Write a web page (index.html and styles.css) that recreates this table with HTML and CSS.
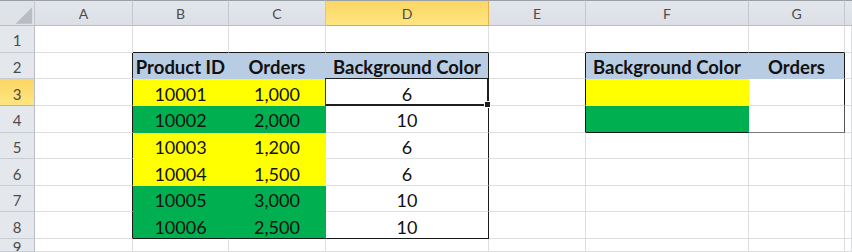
FILE: index.html
```html
<!DOCTYPE html>
<html lang="en">
<head>
<meta charset="utf-8">
<title>Sheet1</title>
<link rel="stylesheet" href="styles.css">
</head>
<body>
<div class="sheet">
  <!-- column headings -->
  <div class="corner"><svg width="35" height="26" viewBox="0 0 35 26"><polygon points="33,7 33,24 16,24" fill="#b9bdc3"/></svg></div>
  <div class="ch">A</div>
  <div class="ch">B</div>
  <div class="ch">C</div>
  <div class="ch sel">D</div>
  <div class="ch">E</div>
  <div class="ch">F</div>
  <div class="ch">G</div>
  <div class="ch last"></div>

  <!-- row 1 -->
  <div class="rh">1</div>
  <div class="c"></div>
  <div class="c kb"></div>
  <div class="c kb"></div>
  <div class="c kb"></div>
  <div class="c"></div>
  <div class="c kb"></div>
  <div class="c kb"></div>
  <div class="c"></div>

  <!-- row 2 -->
  <div class="rh">2</div>
  <div class="c kr"></div>
  <div class="c hb">Product ID</div>
  <div class="c hb">Orders</div>
  <div class="c hb kr">Background Color</div>
  <div class="c kr"></div>
  <div class="c hb">Background Color</div>
  <div class="c hb kr">Orders</div>
  <div class="c"></div>

  <!-- row 3 -->
  <div class="rh sel">3</div>
  <div class="c kr"></div>
  <div class="c y">10001</div>
  <div class="c y">1,000</div>
  <div class="c kr active">6<span class="cursor"><span class="handle"></span></span></div>
  <div class="c kr"></div>
  <div class="c y"></div>
  <div class="c kr"></div>
  <div class="c"></div>

  <!-- row 4 -->
  <div class="rh">4</div>
  <div class="c kr"></div>
  <div class="c g">10002</div>
  <div class="c g">2,000</div>
  <div class="c kr">10</div>
  <div class="c kr"></div>
  <div class="c g kb"></div>
  <div class="c kr kb soft"></div>
  <div class="c"></div>

  <!-- row 5 -->
  <div class="rh">5</div>
  <div class="c kr"></div>
  <div class="c y">10003</div>
  <div class="c y">1,200</div>
  <div class="c kr">6</div>
  <div class="c"></div>
  <div class="c"></div>
  <div class="c"></div>
  <div class="c"></div>

  <!-- row 6 -->
  <div class="rh">6</div>
  <div class="c kr"></div>
  <div class="c y">10004</div>
  <div class="c y">1,500</div>
  <div class="c kr">6</div>
  <div class="c"></div>
  <div class="c"></div>
  <div class="c"></div>
  <div class="c"></div>

  <!-- row 7 -->
  <div class="rh">7</div>
  <div class="c kr"></div>
  <div class="c g">10005</div>
  <div class="c g">3,000</div>
  <div class="c kr">10</div>
  <div class="c"></div>
  <div class="c"></div>
  <div class="c"></div>
  <div class="c"></div>

  <!-- row 8 -->
  <div class="rh">8</div>
  <div class="c kr"></div>
  <div class="c g kb">10006</div>
  <div class="c g kb">2,500</div>
  <div class="c kr kb">10</div>
  <div class="c"></div>
  <div class="c"></div>
  <div class="c"></div>
  <div class="c"></div>

  <!-- row 9 -->
  <div class="rh">9</div>
  <div class="c"></div>
  <div class="c"></div>
  <div class="c"></div>
  <div class="c"></div>
  <div class="c"></div>
  <div class="c"></div>
  <div class="c"></div>
  <div class="c"></div>
</div>
</body>
</html>
```
FILE: styles.css
```css
html, body {
  margin: 0;
  padding: 0;
  background: #ffffff;
}

.sheet {
  display: grid;
  grid-template-columns: 35px 98px 96px 97px 163px 97px 163px 96px 7px;
  grid-template-rows: 26px repeat(8, 26.65px) 1fr;
  width: 852px;
  height: 252px;
  overflow: hidden;
  font-family: Lato, "Open Sans", sans-serif;
}

.sheet > div {
  box-sizing: border-box;
  display: flex;
  align-items: center;
  justify-content: center;
  overflow: hidden;
  white-space: nowrap;
}

/* headings */
.corner,
.ch {
  background: linear-gradient(#e3e6eb, #dcdfe5);
  border-top: 1px solid #9aa0a8;
  border-right: 1px solid #c4c8ce;
  border-bottom: 1px solid #b9bec5;
  color: #4c4c4c;
  font-size: 14px;
  padding-top: 1px;
}

.corner {
  align-items: stretch;
  padding: 0;
  background: #dfe2e7;
}

.corner svg {
  display: block;
  margin-top: -1px;
}

.ch.sel {
  background: linear-gradient(#fbd663, #ffe582);
  border-right-color: #e0b24a;
  border-bottom-color: #d9a93c;
}

.ch.last {
  border-right: none;
}

.rh {
  background: #e4e7ec;
  border-right: 1px solid #b9bec5;
  border-bottom: 1px solid #c9cdd3;
  color: #4c4c4c;
  font-size: 15px;
  padding-top: 3px;
}

.rh.sel {
  background: linear-gradient(#fbd663, #ffe582);
  border-bottom-color: #e0b24a;
}

/* cells */
.c {
  position: relative;
  border-right: 1px solid #dcdedf;
  border-bottom: 1px solid #dcdedf;
  font-size: 18px;
  color: #111111;
  padding-top: 3px;
}

.hb {
  background: #b8cce4;
  border-color: transparent !important;
  font-weight: 700;
  font-size: 18.5px;
}

.y {
  background: #ffff00;
  border-color: transparent !important;
}

.g {
  background: #00b050;
  border-color: transparent !important;
}

.sheet > .kr {
  border-right: 1px solid #1a1a1a !important;
}

.sheet > .kb {
  border-bottom: 1px solid #1a1a1a !important;
}

.sheet > .soft {
  border-right-color: #555555 !important;
  border-bottom-color: #7a7a7a !important;
}

/* active cell cursor */
.sheet > .active {
  overflow: visible;
  z-index: 2;
}

.cursor {
  position: absolute;
  left: -1px;
  top: -1px;
  right: -1px;
  bottom: -1px;
  border: 2px solid #1e1e1e;
  border-top-width: 1px;
  border-left: 1px solid #2a2a9a;
  pointer-events: none;
}

.handle {
  position: absolute;
  right: -4px;
  bottom: -4px;
  width: 5px;
  height: 5px;
  background: #1e1e1e;
  border: 1px solid #ffffff;
}
```
